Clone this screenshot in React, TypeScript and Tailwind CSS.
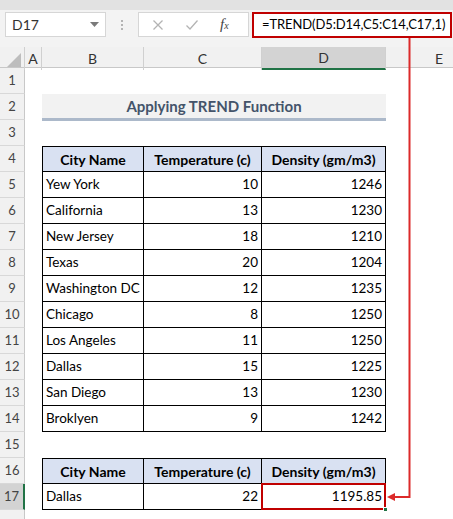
import React from "react";

const rows1 = [
  ["Yew York", 10, 1246],
  ["California", 13, 1230],
  ["New Jersey", 18, 1210],
  ["Texas", 20, 1204],
  ["Washington DC", 12, 1235],
  ["Chicago", 8, 1250],
  ["Los Angeles", 11, 1250],
  ["Dallas", 15, 1225],
  ["San Diego", 13, 1230],
  ["Broklyen", 9, 1242],
];

const cols = "grid grid-cols-[25px_17px_102px_118px_124px_106px]";

function RowHead({ n, active }: { n?: number; active?: boolean }) {
  return (
    <div
      className={
        "flex items-center justify-center text-[13px] text-[#444] border-b border-[#d8d8d8] " +
        (active
          ? "bg-[#d3d3d3] border-r-2 border-r-[#217346]"
          : "bg-[#f1f1f1] border-r border-r-[#c8c8c8]")
      }
    >
      {n}
    </div>
  );
}

function Row({ n, active, children }: { n?: number; active?: boolean; children?: React.ReactNode }) {
  return (
    <div className={cols + " h-[26px] whitespace-nowrap"}>
      <RowHead n={n} active={active} />
      {children}
    </div>
  );
}

function HeaderCells() {
  return (
    <>
      <div />
      {["City Name", "Temperature (c)", "Density (gm/m3)"].map((h, i) => (
        <div
          key={h}
          className={
            "flex items-center justify-center bg-[#d9e1f2] font-bold text-[14px] text-black border-t border-r border-b border-black " +
            (i === 0 ? "border-l" : "")
          }
        >
          {h}
        </div>
      ))}
      <div />
    </>
  );
}

function DataCells({ city, temp, dens, mark }: { city: string; temp: number; dens: string | number; mark?: boolean }) {
  return (
    <>
      <div />
      <div className="flex items-center pl-[3px] text-[13.5px] text-black border-l border-r border-b border-black">
        {city}
      </div>
      <div className="flex items-center justify-end pr-[3px] text-[13.5px] text-black border-r border-b border-black">
        {temp}
      </div>
      <div className="relative flex items-center justify-end pr-[3px] text-[13.5px] text-black border-r border-b border-black">
        {dens}
        {mark && (
          <>
            <div className="absolute -left-[1px] -top-[1px] -right-[1px] -bottom-[1px] border-2 border-[#c00000]" />
            <div className="absolute -right-[3px] -bottom-[3px] w-[5px] h-[5px] bg-[#217346] border border-white" />
          </>
        )}
      </div>
      <div />
    </>
  );
}

export default function App() {
  return (
    <div className="relative w-[453px] h-[519px] overflow-hidden bg-white font-['Lato',sans-serif]">
      {/* ribbon edge */}
      <div className="h-[10px] bg-[#e2e2e2]" />

      {/* formula bar */}
      <div className="h-[37px] bg-[#f3f3f3] flex items-start pt-[2px]">
        <div className="ml-[5px] w-[101px] h-[25px] bg-white border border-[#d6d6d6] flex items-center justify-between pl-[6px] pr-[6px]">
          <span className="text-[14px] text-[#333]">D17</span>
          <svg width="9" height="5" viewBox="0 0 9 5">
            <path d="M0 0 L9 0 L4.5 5 Z" fill="#7a7a7a" />
          </svg>
        </div>
        <div className="w-[32px] h-[25px] flex flex-col items-center justify-center gap-[2px]">
          <span className="w-[2px] h-[2px] bg-[#b4b4b4]" />
          <span className="w-[2px] h-[2px] bg-[#b4b4b4]" />
          <span className="w-[2px] h-[2px] bg-[#b4b4b4]" />
        </div>
        <div className="w-[111px] h-[25px] bg-white border border-[#d6d6d6] flex items-center">
          <svg width="12" height="12" viewBox="0 0 12 12" className="ml-[13px]">
            <path d="M1.5 1.5 L10.5 10.5 M10.5 1.5 L1.5 10.5" stroke="#b3b3b3" strokeWidth="1.3" />
          </svg>
          <svg width="14" height="12" viewBox="0 0 14 12" className="ml-[21px]">
            <path d="M1.5 6.5 L5 10 L12.5 1.5" stroke="#b3b3b3" strokeWidth="1.3" fill="none" />
          </svg>
          <span className="ml-[21px] font-['Liberation_Serif',serif] italic text-[15px] text-[#444] leading-none">
            f<span className="text-[10px]">x</span>
          </span>
        </div>
        <div className="ml-[3px] w-[200px] h-[26px] bg-white border-2 border-[#c00000] flex items-center pl-[8px] text-[13px] tracking-[-0.1px] text-black whitespace-nowrap overflow-hidden">
          =TREND(D5:D14,C5:C14,C17,1)
        </div>
      </div>

      {/* column headers */}
      <div className={cols + " h-[21px] bg-[#f1f1f1] border-b border-[#c8c8c8] text-[14px] text-[#333]"}>
        <div className="relative border-r border-[#d0d0d0]">
          <svg width="14" height="14" viewBox="0 0 14 14" className="absolute right-[3px] bottom-[3px]">
            <path d="M14 0 L14 14 L0 14 Z" fill="#bdbdbd" />
          </svg>
        </div>
        <div className="flex items-center justify-center border-r border-[#d0d0d0]">A</div>
        <div className="flex items-center justify-center border-r border-[#d0d0d0]">B</div>
        <div className="flex items-center justify-center border-r border-[#d0d0d0]">C</div>
        <div className="flex items-center justify-center bg-[#d3d3d3] border-b-2 border-[#217346] border-r border-r-[#d0d0d0]">D</div>
        <div className="flex items-center justify-center">E</div>
      </div>

      <Row n={1} />
      <Row n={2}>
        <div />
        <div className="col-span-3 flex items-center justify-center bg-[#f2f2f2] border-b-[3px] border-[#acb9ca] text-[15px] font-bold text-[#44546a] mb-[-1px]">
          Applying TREND Function
        </div>
      </Row>
      <Row n={3} />
      <Row n={4}>
        <HeaderCells />
      </Row>
      {rows1.map(([c, t, d], i) => (
        <Row key={i} n={5 + i}>
          <DataCells city={c as string} temp={t as number} dens={d as number} />
        </Row>
      ))}
      <Row n={15} />
      <Row n={16}>
        <HeaderCells />
      </Row>
      <Row n={17} active>
        <DataCells city="Dallas" temp={22} dens="1195.85" mark />
      </Row>
      <Row />

      {/* leader arrow from formula to result */}
      <svg className="absolute left-0 top-0 pointer-events-none" width="453" height="519" viewBox="0 0 453 519">
        <path d="M409.5 38 L409.5 497 L393 497" stroke="#dc2a2a" strokeWidth="2" fill="none" />
        <path d="M387 497 L395 493 L395 501 Z" fill="#dc2a2a" />
      </svg>
    </div>
  );
}
